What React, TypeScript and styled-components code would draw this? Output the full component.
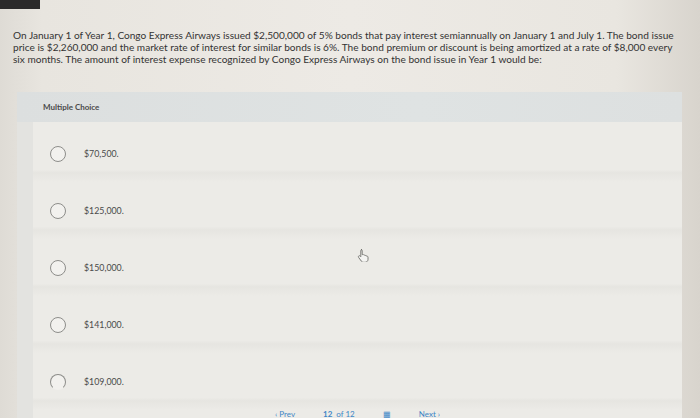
import React from "react"
import styled, { createGlobalStyle } from "styled-components"

const GlobalStyle = createGlobalStyle`
  html, body {
    margin: 0;
    padding: 0;
  }
  body {
    width: 700px;
    height: 418px;
    overflow: hidden;
    font-family: Lato, "Open Sans", "Liberation Sans", sans-serif;
    background: linear-gradient(
      to right,
      #dedbd5 0%,
      #e8e5df 6%,
      #edeae5 50%,
      #e9e6e0 88%,
      #d8d4cd 100%
    );
  }
`

const Page = styled.div`
  position: relative;
  width: 700px;
  height: 418px;
  overflow: hidden;
`

const TopBlock = styled.div`
  width: 40px;
  height: 9px;
  background: #2b2a2a;
`

const Question = styled.p`
  margin: 20px 0 0 13px;
  width: 668px;
  font-size: 10.1px;
  line-height: 12px;
  color: #333;
`

const Panel = styled.section`
  margin: 27px 0 0 17px;
  width: 665px;
  background: #e3e3e0;
`

const PanelHeader = styled.div`
  height: 30px;
  display: flex;
  align-items: center;
  padding-left: 26px;
  background: linear-gradient(to right, #dcdfdf, #dfe3e3 60%, #dde0e0);
  font-size: 8px;
  font-weight: 700;
  color: #4a4a4a;
`

const Options = styled.div`
  margin-left: 16px;
  padding-top: 3px;
  background: #ecebe7;
`

const OptionRow = styled.label`
  display: flex;
  align-items: center;
  height: 57px;
  padding-left: 17px;
  gap: 18px;
  background: linear-gradient(
    to bottom,
    rgba(0, 0, 0, 0) 0%,
    rgba(0, 0, 0, 0) 78%,
    rgba(120, 120, 110, 0.05) 84%,
    rgba(0, 0, 0, 0) 100%
  );
`

const Radio = styled.span<{ $faded?: boolean }>`
  width: 14px;
  height: 14px;
  border-radius: 50%;
  border: 1px solid #8d8d8a;
  background: #f2f1ee;
  border-bottom-color: ${(p) => (p.$faded ? "transparent" : "#8d8d8a")};
`

const OptionText = styled.span`
  font-size: 8.8px;
  color: #4a4a4a;
`

const Nav = styled.nav`
  display: flex;
  align-items: flex-start;
  gap: 28px;
  padding: 0 0 0 242px;
  font-size: 8px;
  line-height: 9px;
  color: #3d86c6;
`

const Pager = styled.span`
  display: flex;
  gap: 4px;
`

const Cursor = styled.svg`
  position: absolute;
  left: 357px;
  top: 248px;
`

const answers = ["$70,500.", "$125,000.", "$150,000.", "$141,000.", "$109,000."]

const App = () => {
  return (
    <Page>
      <GlobalStyle />
      <TopBlock />
      <Question>
        On January 1 of Year 1, Congo Express Airways issued $2,500,000 of 5% bonds that pay
        interest semiannually on January 1 and July 1. The bond issue price is $2,260,000 and the
        market rate of interest for similar bonds is 6%. The bond premium or discount is being
        amortized at a rate of $8,000 every six months. The amount of interest expense recognized
        by Congo Express Airways on the bond issue in Year 1 would be:
      </Question>
      <Panel>
        <PanelHeader>Multiple Choice</PanelHeader>
        <Options>
          {answers.map((a, i) => (
            <OptionRow key={a}>
              <Radio $faded={i === answers.length - 1} />
              <OptionText>{a}</OptionText>
            </OptionRow>
          ))}
          <Nav>
            <span>‹ Prev</span>
            <Pager>
              <b>12</b> of 12
            </Pager>
            <span>▦</span>
            <span>Next ›</span>
          </Nav>
        </Options>
      </Panel>
      <Cursor width="13" height="14" viewBox="0 0 13 14">
        <path
          d="M4 1.5c.7 0 1.2.5 1.2 1.2v4l.3-.1c.6-.3 1.2 0 1.4.5.5-.3 1.2-.1 1.4.5.6-.3 1.3 0 1.4.6.7-.2 1.3.3 1.3 1v2.2c0 1.6-1.3 2.9-2.9 2.9H6.6c-.9 0-1.7-.4-2.2-1.1L1.6 9.4c-.4-.5-.3-1.2.2-1.5.4-.3 1-.2 1.3.1l.7.7V2.7c0-.7.5-1.2 1.2-1.2z"
          fill="#f4f4f2"
          stroke="#6f6f6c"
          strokeWidth="0.9"
        />
      </Cursor>
    </Page>
  )
}

export default App
